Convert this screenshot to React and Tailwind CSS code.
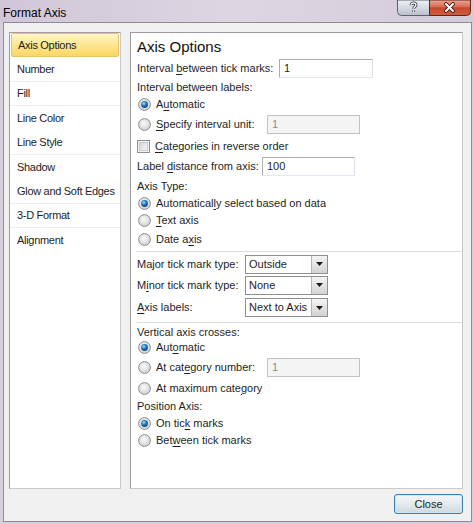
import React from 'react';

const leftItems = [
  { label: 'Axis Options', selected: true },
  { label: 'Number', line: true },
  { label: 'Fill', line: true },
  { label: 'Line Color' },
  { label: 'Line Style', line: true },
  { label: 'Shadow' },
  { label: 'Glow and Soft Edges', line: true },
  { label: '3-D Format', line: true },
  { label: 'Alignment' },
];

function Radio({ checked }) {
  return (
    <svg width="13" height="13" viewBox="0 0 13 13" className="shrink-0">
      <defs>
        <radialGradient id="rbg" cx="0.45" cy="0.4" r="0.6">
          <stop offset="0" stopColor="#fafafa" />
          <stop offset="1" stopColor="#cfd1d3" />
        </radialGradient>
        <radialGradient id="rdot" cx="0.4" cy="0.35" r="0.65">
          <stop offset="0" stopColor="#b8e2fb" />
          <stop offset="0.45" stopColor="#2e86c9" />
          <stop offset="1" stopColor="#0c3f6e" />
        </radialGradient>
      </defs>
      <circle cx="6.5" cy="6.5" r="5.9" fill="url(#rbg)" stroke="#8c8f93" strokeWidth="1" />
      {checked && <circle cx="6.5" cy="6.5" r="3.4" fill="url(#rdot)" />}
    </svg>
  );
}

function Check() {
  return (
    <svg width="13" height="13" viewBox="0 0 13 13" className="shrink-0">
      <defs>
        <linearGradient id="cbg" x1="0" y1="0" x2="1" y2="1">
          <stop offset="0" stopColor="#d3d5d8" />
          <stop offset="1" stopColor="#f7f7f7" />
        </linearGradient>
      </defs>
      <rect x="0.5" y="0.5" width="12" height="12" fill="#f4f4f4" stroke="#8c8f93" />
      <rect x="2.5" y="2.5" width="8" height="8" fill="url(#cbg)" stroke="#c6c8cb" />
    </svg>
  );
}

// caption buttons (help + close)
function CaptionButtons() {
  return (
    <svg width="74" height="16" viewBox="0 0 74 16" className="shrink-0">
      <defs>
        <linearGradient id="hbg" x1="0" y1="0" x2="0" y2="1">
          <stop offset="0" stopColor="#eef0f4" />
          <stop offset="0.5" stopColor="#d5d9e1" />
          <stop offset="1" stopColor="#b8bfcc" />
        </linearGradient>
        <linearGradient id="xbg" x1="0" y1="0" x2="0" y2="1">
          <stop offset="0" stopColor="#eaa796" />
          <stop offset="0.45" stopColor="#d86a52" />
          <stop offset="0.5" stopColor="#c8462c" />
          <stop offset="1" stopColor="#d0603f" />
        </linearGradient>
      </defs>
      <path d="M0.5 0v11.5a4 4 0 0 0 4 4h28V0z" fill="url(#hbg)" stroke="#5d6068" />
      <path d="M32.5 0v15.5h37a4 4 0 0 0 4-4V0z" fill="url(#xbg)" stroke="#5e231b" />
      <path d="M14 5.2c0-1.4 1.1-2.2 2.5-2.2s2.5.8 2.5 2.1c0 1.6-2.3 1.8-2.3 3.6M16.7 10.5v1.5" fill="none" stroke="#2a2d33" strokeWidth="2.8" />
      <path d="M14 5.2c0-1.4 1.1-2.2 2.5-2.2s2.5.8 2.5 2.1c0 1.6-2.3 1.8-2.3 3.6M16.7 10.5v1.5" fill="none" stroke="#ffffff" strokeWidth="1.3" />
      <path d="M49 4l7 7M56 4l-7 7" stroke="#3a1410" strokeWidth="3.8" strokeLinecap="round" />
      <path d="M49 4l7 7M56 4l-7 7" stroke="#ffffff" strokeWidth="2" strokeLinecap="round" />
    </svg>
  );
}

function TextBox({ value, disabled, w }) {
  return (
    <div
      className={`h-[19px] border flex items-center pl-[4px] ${w} ${
        disabled ? 'bg-[#f4f4f4] border-[#c2c2c2] text-[#8d8d8d]' : 'bg-white border-[#abadb3] border-r-[#dbdfe6] border-b-[#e3e9ef]'
      }`}
    >
      {value}
    </div>
  );
}

function Select({ value }) {
  return (
    <div className="w-[83px] h-[19px] border border-[#8e8f8f] bg-white flex items-center">
      <div className="flex-1 pl-[3px] whitespace-nowrap overflow-hidden">{value}</div>
      <div className="w-[16px] h-[17px] border-l border-[#b4b4b4] bg-linear-to-b from-[#f4f4f4] to-[#d3d3d3] flex items-center justify-center">
        <svg width="7" height="4" viewBox="0 0 7 4">
          <path d="M0 0h7L3.5 4z" fill="#1a1a1a" />
        </svg>
      </div>
    </div>
  );
}

function RadioRow({ h, checked, children }) {
  return (
    <div className={`${h} flex items-center gap-[5px] pl-[1px]`}>
      <Radio checked={checked} />
      <span>{children}</span>
    </div>
  );
}

const U = ({ children }) => <u className="underline underline-offset-[2px]">{children}</u>;

export default function App() {
  return (
    <div className="w-[474px] h-[524px] overflow-hidden flex flex-col bg-[#d6cedc] font-['Liberation_Sans',Arial,sans-serif] text-[11px] text-[#1e1e1e]">
      {/* title bar */}
      <div className="h-[22px] shrink-0 flex items-start justify-between bg-linear-to-r from-[#d0c6d8] via-[#ddd6e2] to-[#d3cbda]">
        <div className="pl-[3px] pt-[4px] text-[12px] text-black">Format Axis</div>
        <div className="mr-[3px]">
          <CaptionButtons />
        </div>
      </div>

      {/* body */}
      <div className="flex-1 ml-[3px] mr-[2px] mb-[2px] bg-[#f0f0f0] border border-[#8f8a96] flex flex-col pt-[9px] px-[5px]">
        <div className="flex gap-[9px] h-[457px]">
          {/* left nav */}
          <div className="w-[112px] bg-white border border-[#9c9c9c] border-r-[#c9c9c9] border-b-[#c9c9c9] flex flex-col tracking-[-0.3px]">
            {leftItems.map((it) => (
              <div
                key={it.label}
                className={`h-[24.4px] flex items-center whitespace-nowrap ${
                  it.line ? 'border-b border-[#eceef0]' : ''
                } ${
                  it.selected
                    ? 'mx-[1px] border border-[#e4c36b] rounded-[2px] bg-[#fde58f] bg-linear-to-b from-[#fff6cf] via-[#fde58f] to-[#fbd763] pl-[6px]'
                    : 'pl-[7px]'
                }`}
              >
                {it.label}
              </div>
            ))}
          </div>

          {/* right panel */}
          <div className="w-[333px] bg-white border border-[#9c9c9c] border-r-[#c9c9c9] border-b-[#c9c9c9] pl-[6px] pt-[3px] flex flex-col">
            <div className="h-[22px] flex items-center text-[15px] text-[#111]">Axis Options</div>

            <div className="h-[21px] flex items-center">
              <span className="w-[142px]">
                Interval <U>b</U>etween tick marks:
              </span>
              <TextBox value="1" w="w-[94px]" />
            </div>
            <div className="h-[17px] flex items-center">Interval between labels:</div>
            <RadioRow h="h-[17px]" checked>
              A<U>u</U>tomatic
            </RadioRow>
            <div className="h-[23px] flex items-center gap-[5px] pl-[1px]">
              <Radio />
              <span className="w-[106px]">
                <U>S</U>pecify interval unit:
              </span>
              <TextBox value="1" disabled w="w-[93px]" />
            </div>
            <div className="h-[20px] flex items-center gap-[5px]">
              <Check />
              <span>
                <U>C</U>ategories in reverse order
              </span>
            </div>
            <div className="h-[21px] flex items-center">
              <span className="w-[125px]">
                Label <U>d</U>istance from axis:
              </span>
              <TextBox value="100" w="w-[93px]" />
            </div>
            <div className="h-[18px] flex items-center">Axis Type:</div>
            <RadioRow h="h-[16px]" checked>
              Automatical<U>l</U>y select based on data
            </RadioRow>
            <RadioRow h="h-[19px]">
              <U>T</U>ext axis
            </RadioRow>
            <RadioRow h="h-[18px]">
              Date a<U>x</U>is
            </RadioRow>

            <div className="h-[6px] flex items-center">
              <div className="flex-1 h-px bg-[#dcdcdc]" />
            </div>

            <div className="h-[20px] flex items-center">
              <span className="w-[108px]">Major tick mark type:</span>
              <Select value="Outside" />
            </div>
            <div className="h-[22px] flex items-center">
              <span className="w-[108px]">
                M<U>i</U>nor tick mark type:
              </span>
              <Select value="None" />
            </div>
            <div className="h-[23px] flex items-center">
              <span className="w-[108px]">
                <U>A</U>xis labels:
              </span>
              <Select value="Next to Axis" />
            </div>

            <div className="h-[6px] flex items-center">
              <div className="flex-1 h-px bg-[#dcdcdc]" />
            </div>

            <div className="h-[14px] flex items-center">Vertical axis crosses:</div>
            <RadioRow h="h-[17px]" checked>
              Aut<U>o</U>matic
            </RadioRow>
            <div className="h-[23px] flex items-center gap-[5px] pl-[1px]">
              <Radio />
              <span className="w-[106px]">
                At cat<U>e</U>gory number:
              </span>
              <TextBox value="1" disabled w="w-[93px]" />
            </div>
            <RadioRow h="h-[18px]">
              At maximum cate<U>g</U>ory
            </RadioRow>
            <div className="h-[18px] flex items-center">Position Axis:</div>
            <RadioRow h="h-[16px]" checked>
              On tic<U>k</U> marks
            </RadioRow>
            <RadioRow h="h-[19px]">
              Bet<U>w</U>een tick marks
            </RadioRow>
          </div>
        </div>

        <div className="flex justify-end pt-[5px] pr-[3px]">
          <button className="w-[69px] h-[20px] rounded-[3px] border border-[#3c7fb1] bg-[#e4eaee] bg-linear-to-b from-[#f4f7f9] via-[#e4eaee] to-[#cfd8de] shadow-[inset_0_0_0_1px_#cbe8f8] text-[11px] text-[#1e1e1e]">
            Close
          </button>
        </div>
      </div>
    </div>
  );
}
